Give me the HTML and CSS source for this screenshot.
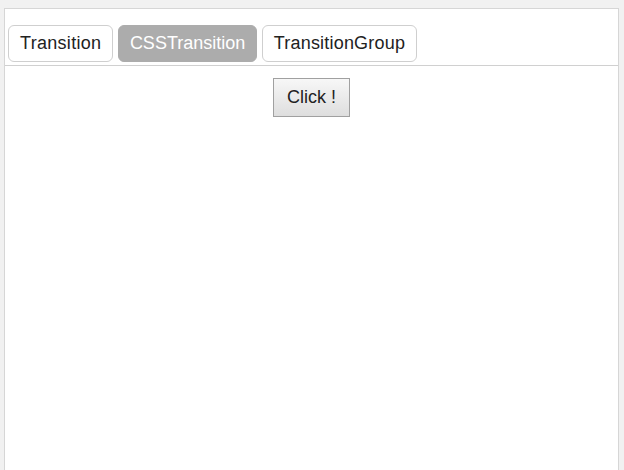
FILE: index.html
```html
<html>
  <head>
    <title>Transitions</title>
    <link rel="stylesheet" href="styles.css">
  </head>
  <body>
    <div class="panel">
      <div class="tabs">
        <a class="tab">Transition</a>
        <a class="tab active">CSSTransition</a>
        <a class="tab">TransitionGroup</a>
      </div>
      <div class="content">
        <button class="click">Click !</button>
      </div>
    </div>
  </body>
</html>
```

FILE: styles.css
```css
body {
  margin: 0;
  background-color: #f1f1f1;
  font-family: "Liberation Sans", Arial, sans-serif;
}
.panel {
  margin: 8px 5px 0 4px;
  height: calc(100vh - 9px);
  background: #fff;
  border: 1px solid #d6d6d6;
  border-bottom: none;
}
.tabs {
  display: flex;
  gap: 5px;
  padding: 16px 3px 3px;
  border-bottom: 1px solid #d0d0d0;
}
.tab {
  display: block;
  height: 35px;
  line-height: 35px;
  padding: 0 11px;
  font-size: 18px;
  letter-spacing: 0.3px;
  color: #222;
  border: 1px solid #cfcfcf;
  border-radius: 6px;
  cursor: pointer;
}
.tab.active {
  background: #acacac;
  border-color: #acacac;
  color: #fff;
  padding: 0 10.5px;
  letter-spacing: 0;
}
.tab:last-child {
  letter-spacing: 0.2px;
}
.content {
  text-align: center;
  padding-top: 12px;
}
.click {
  width: 77px;
  height: 39px;
  font-family: "Liberation Sans", Arial, sans-serif;
  font-size: 18px;
  color: #222;
  background: linear-gradient(#f7f7f7, #dedede);
  border: 1px solid #a0a0a0;
}
```
